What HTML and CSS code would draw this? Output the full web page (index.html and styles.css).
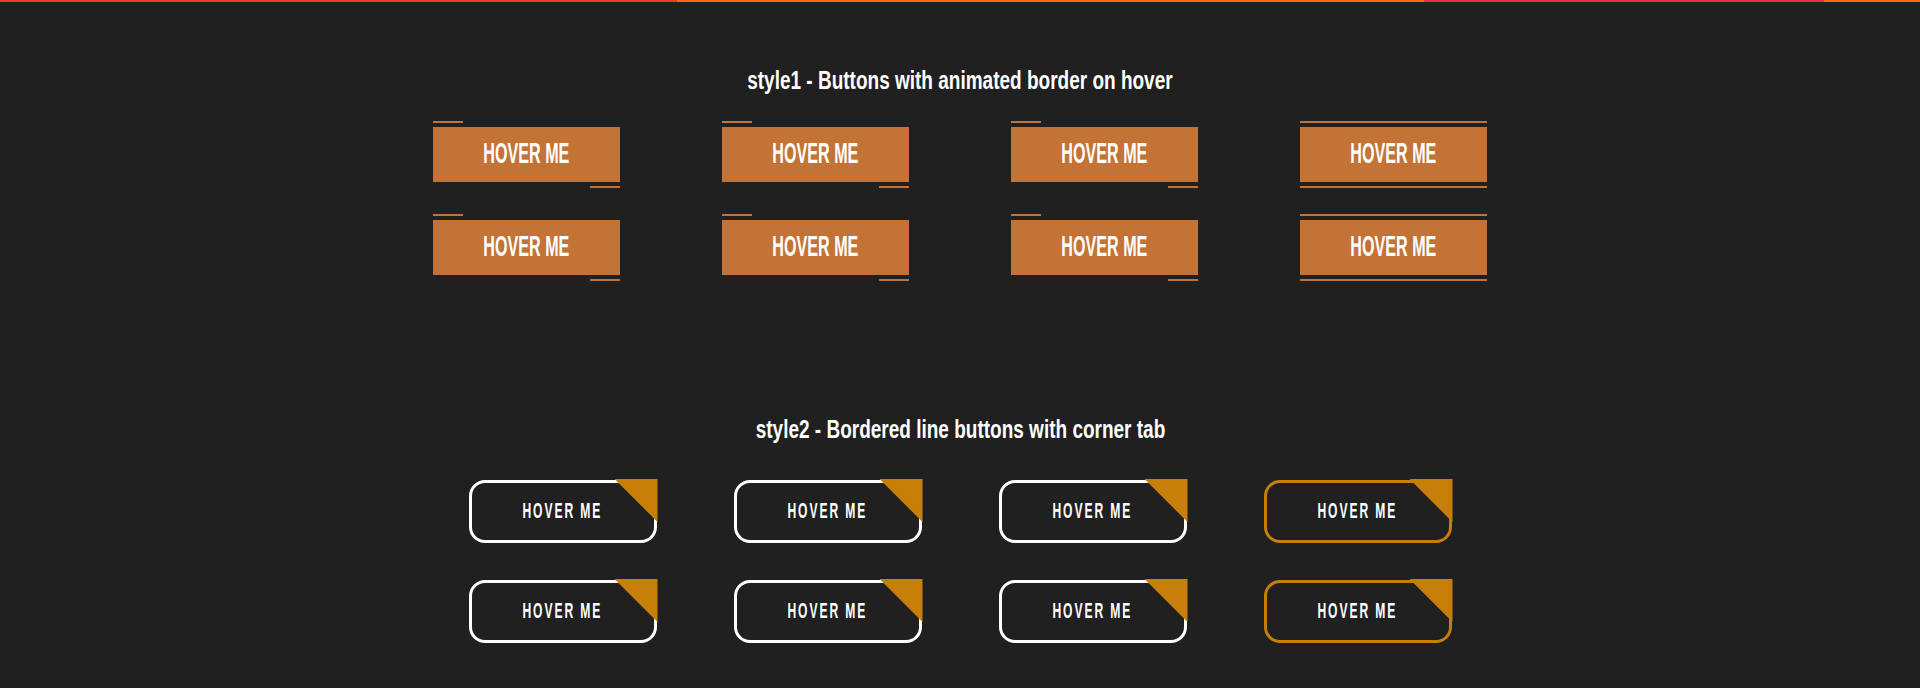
FILE: index.html
```html
<!DOCTYPE html>
<html lang="en">
<head>
<meta charset="utf-8">
<title>Buttons</title>
<link rel="stylesheet" href="styles.css">
</head>
<body>
<div class="topbar">
  <span class="seg seg-a"></span>
  <span class="seg seg-b"></span>
  <span class="seg seg-c"></span>
  <span class="seg seg-d"></span>
</div>

<section class="section section-one">
  <h2 class="title"><span class="title-text">style1 - Buttons with animated border on hover</span></h2>
  <div class="grid-one">
    <div class="item-one"><i class="line line-top"></i><a class="btn-one" href="#"><span class="btn-one-text">HOVER ME</span></a><i class="line line-bottom"></i></div>
    <div class="item-one"><i class="line line-top"></i><a class="btn-one" href="#"><span class="btn-one-text">HOVER ME</span></a><i class="line line-bottom"></i></div>
    <div class="item-one"><i class="line line-top"></i><a class="btn-one" href="#"><span class="btn-one-text">HOVER ME</span></a><i class="line line-bottom"></i></div>
    <div class="item-one item-full"><i class="line line-top"></i><a class="btn-one" href="#"><span class="btn-one-text">HOVER ME</span></a><i class="line line-bottom"></i></div>
    <div class="item-one"><i class="line line-top"></i><a class="btn-one" href="#"><span class="btn-one-text">HOVER ME</span></a><i class="line line-bottom"></i></div>
    <div class="item-one"><i class="line line-top"></i><a class="btn-one" href="#"><span class="btn-one-text">HOVER ME</span></a><i class="line line-bottom"></i></div>
    <div class="item-one"><i class="line line-top"></i><a class="btn-one" href="#"><span class="btn-one-text">HOVER ME</span></a><i class="line line-bottom"></i></div>
    <div class="item-one item-full"><i class="line line-top"></i><a class="btn-one" href="#"><span class="btn-one-text">HOVER ME</span></a><i class="line line-bottom"></i></div>
  </div>
</section>

<section class="section section-two">
  <h2 class="title"><span class="title-text">style2 - Bordered line buttons with corner tab</span></h2>
  <div class="grid-two">
    <a class="btn-two" href="#"><span class="btn-two-text">HOVER ME</span><i class="tab"></i></a>
    <a class="btn-two" href="#"><span class="btn-two-text">HOVER ME</span><i class="tab"></i></a>
    <a class="btn-two" href="#"><span class="btn-two-text">HOVER ME</span><i class="tab"></i></a>
    <a class="btn-two btn-two-accent" href="#"><span class="btn-two-text">HOVER ME</span><i class="tab"></i></a>
    <a class="btn-two" href="#"><span class="btn-two-text">HOVER ME</span><i class="tab"></i></a>
    <a class="btn-two" href="#"><span class="btn-two-text">HOVER ME</span><i class="tab"></i></a>
    <a class="btn-two" href="#"><span class="btn-two-text">HOVER ME</span><i class="tab"></i></a>
    <a class="btn-two btn-two-accent" href="#"><span class="btn-two-text">HOVER ME</span><i class="tab"></i></a>
  </div>
</section>
</body>
</html>
```

FILE: styles.css
```css
html, body {
  margin: 0;
  padding: 0;
}

body {
  background: #202020;
  color: #ffffff;
  font-family: "Liberation Sans", Arial, sans-serif;
  height: 688px;
  overflow: hidden;
}

.topbar {
  display: flex;
  height: 2px;
}

.seg { display: block; height: 100%; }
.seg-a { width: 677px; background: #ee3a2e; }
.seg-b { width: 747px; background: #ff6914; }
.seg-c { width: 400px; background: #e8304a; }
.seg-d { flex: 1; background: #ff6914; }

.section {
  display: flex;
  flex-direction: column;
  align-items: center;
}

.section-one { padding-top: 63px; }
.section-two { padding-top: 133px; }

.title {
  margin: 0;
  font-size: 25px;
  line-height: 30px;
  font-weight: bold;
  color: #ffffff;
  text-align: center;
  white-space: nowrap;
}

.title-text {
  display: inline-block;
  transform: scaleX(0.76);
  transform-origin: center;
}

/* style 1 */
.grid-one {
  margin-top: 26px;
  display: grid;
  grid-template-columns: repeat(4, 187px);
  column-gap: 102px;
  row-gap: 26px;
}

.item-one {
  display: flex;
  flex-direction: column;
  gap: 4px;
}

.line {
  display: block;
  height: 2px;
  width: 30px;
  background: #c47336;
}

.line-top { align-self: flex-start; }
.line-bottom { align-self: flex-end; }

.item-full .line { width: 100%; }

.btn-one {
  height: 55px;
  background: #c47336;
  display: flex;
  align-items: center;
  justify-content: center;
  text-decoration: none;
  color: #ffffff;
}

.btn-one-text {
  display: inline-block;
  font-size: 29px;
  font-weight: bold;
  line-height: 1;
  white-space: nowrap;
  transform: scaleX(0.556);
  margin-top: -2px;
}

/* style 2 */
.grid-two {
  margin-top: 36px;
  display: grid;
  grid-template-columns: repeat(4, 188px);
  column-gap: 77px;
  row-gap: 37px;
}

.btn-two {
  position: relative;
  box-sizing: border-box;
  height: 63px;
  border: 3px solid #ffffff;
  border-radius: 16px;
  display: flex;
  align-items: center;
  justify-content: center;
  text-decoration: none;
  color: #ffffff;
}

.btn-two-accent { border-color: #c87f0a; }

.btn-two-text {
  display: inline-block;
  font-size: 22px;
  font-weight: bold;
  line-height: 1;
  letter-spacing: 3.5px;
  padding-left: 3.5px;
  margin-top: -2px;
  margin-left: -3px;
  white-space: nowrap;
  transform: scaleX(0.55);
}

.tab {
  position: absolute;
  top: -4px;
  right: -4px;
  width: 43px;
  height: 43px;
  background: #c87f0a;
  clip-path: polygon(0 0, 100% 0, 100% 100%);
}
```
